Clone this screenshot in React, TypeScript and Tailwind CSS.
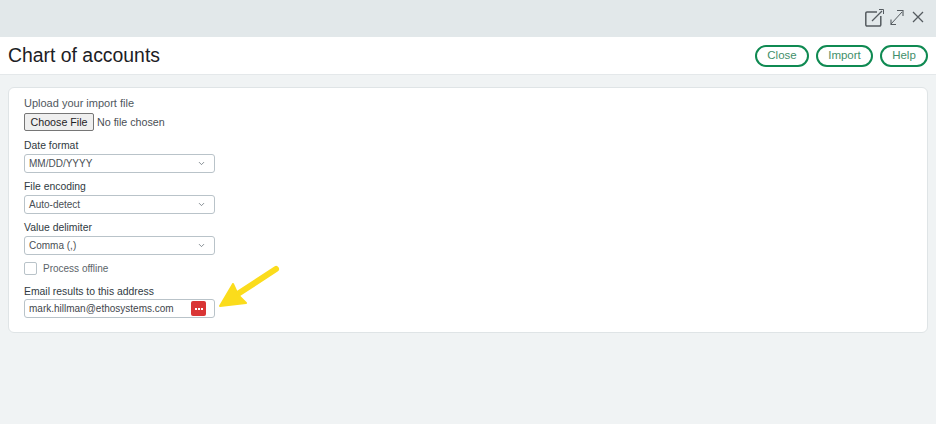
import { ChevronDown } from "lucide-react";

const font = "font-['Liberation_Sans',Arial,sans-serif]";

function SelectField({ label, value }: { label: string; value: string }) {
    return (
        <div className="mt-[7px]">
            <div className="text-[10.4px] leading-[13px] text-[#303a42]">{label}</div>
            <div className="mt-[2px] w-[191px] h-[19px] flex items-center pl-[4px] pr-[8px] bg-white border border-[#b9c3c9] rounded-[3px] text-[10px] text-[#4a4f55]">
                <span>{value}</span>
                <ChevronDown className="ml-auto text-[#5f6a71]" size={9} strokeWidth={2} />
            </div>
        </div>
    );
}

function PillButton({ label, width }: { label: string; width: string }) {
    return (
        <div className={`${width} h-[22px] flex items-center justify-center rounded-full border-2 border-[#0f8a52] bg-white text-[11.5px] text-[#3f8f6a]`}>
            {label}
        </div>
    );
}

export default function App() {
    return (
        <div className={`${font} w-[936px] h-[424px] overflow-hidden bg-[#f0f3f4] flex flex-col`}>
            <div className="h-[37px] bg-[#e2e8ea] flex items-start justify-end shrink-0">
                <svg width="62" height="26" viewBox="0 0 62 26" fill="none" className="mt-[8px] mr-[10px] text-[#555b60]" stroke="currentColor">
                    <path d="M13 4H3a1.2 1.2 0 0 0-1.2 1.2v11.6A1.2 1.2 0 0 0 3 18h12.6a1.2 1.2 0 0 0 1.2-1.2V8" strokeWidth="1.5" />
                    <path d="M8 13 18 3" strokeWidth="1.3" />
                    <path d="M15 1.5h4.5V6" strokeWidth="1" />
                    <path d="M27 16 38 4" strokeWidth="1" />
                    <path d="M27 11.5V16.5H32" strokeWidth="1.1" />
                    <path d="M33 2.5H39V8" strokeWidth="1.1" />
                    <path d="M49 4 59 14M59 4 49 14" strokeWidth="1.3" />
                </svg>
            </div>
            <div className="h-[38px] shrink-0 bg-white border-b border-[#e4e8ea] flex items-center pl-[8px] pr-[8px]">
                <h1 className="text-[19.4px] text-[#1c2024]">Chart of accounts</h1>
                <div className="ml-auto flex gap-[7px]">
                    <PillButton label="Close" width="w-[54px]" />
                    <PillButton label="Import" width="w-[57px]" />
                    <PillButton label="Help" width="w-[48px]" />
                </div>
            </div>
            <div className="mt-[12px] mx-[8px] h-[246px] bg-white border border-[#dfe4e6] rounded-[6px] pt-[9px] pl-[15px]">
                <div className="text-[11px] leading-[13px] text-[#50585e]">Upload your import file</div>
                <div className="mt-[3px] flex items-center text-[10.7px] text-[#4a4f55]">
                    <div className="w-[70px] h-[18px] flex items-center justify-center bg-[#efefef] border border-[#767676] rounded-[2px] text-[#1f2326]">Choose File</div>
                    <span className="ml-[3px]">No file chosen</span>
                </div>
                <div className="h-[1px]" />
                <SelectField label="Date format" value="MM/DD/YYYY" />
                <SelectField label="File encoding" value="Auto-detect" />
                <SelectField label="Value delimiter" value="Comma (,)" />
                <div className="mt-[6px] flex items-center">
                    <div className="w-[13px] h-[13px] bg-white border border-[#b9c3c9] rounded-[2px]" />
                    <span className="ml-[6px] text-[10px] text-[#5c6469]">Process offline</span>
                </div>
                <div className="mt-[9px]">
                    <div className="text-[10.4px] leading-[13px] text-[#303a42]">Email results to this address</div>
                    <div className="relative mt-[1px] w-[191px] h-[19px] flex items-center pl-[4px] bg-white border border-[#b9c3c9] rounded-[3px] text-[10px] text-[#3f464c]">
                        <span>mark.hillman@ethosystems.com</span>
                        <div className="absolute left-[166px] top-[1px] w-[15px] h-[15px] bg-[#d93535] rounded-[2px] flex items-center justify-center gap-[1px]">
                            <span className="w-[2px] h-[2px] bg-white" />
                            <span className="w-[2px] h-[2px] bg-white" />
                            <span className="w-[2px] h-[2px] bg-white" />
                        </div>
                    </div>
                </div>
            </div>
            <svg width="62" height="46" viewBox="0 0 62 46" fill="none" className="absolute left-[218px] top-[265px]">
                <path d="M58 4 12 34" stroke="#fbdc1c" strokeWidth="6" strokeLinecap="round" />
                <path d="M15 19 2 41 28 38 20 30Z" fill="#fbdc1c" stroke="#fbdc1c" strokeWidth="2" strokeLinejoin="round" />
            </svg>
        </div>
    );
}
